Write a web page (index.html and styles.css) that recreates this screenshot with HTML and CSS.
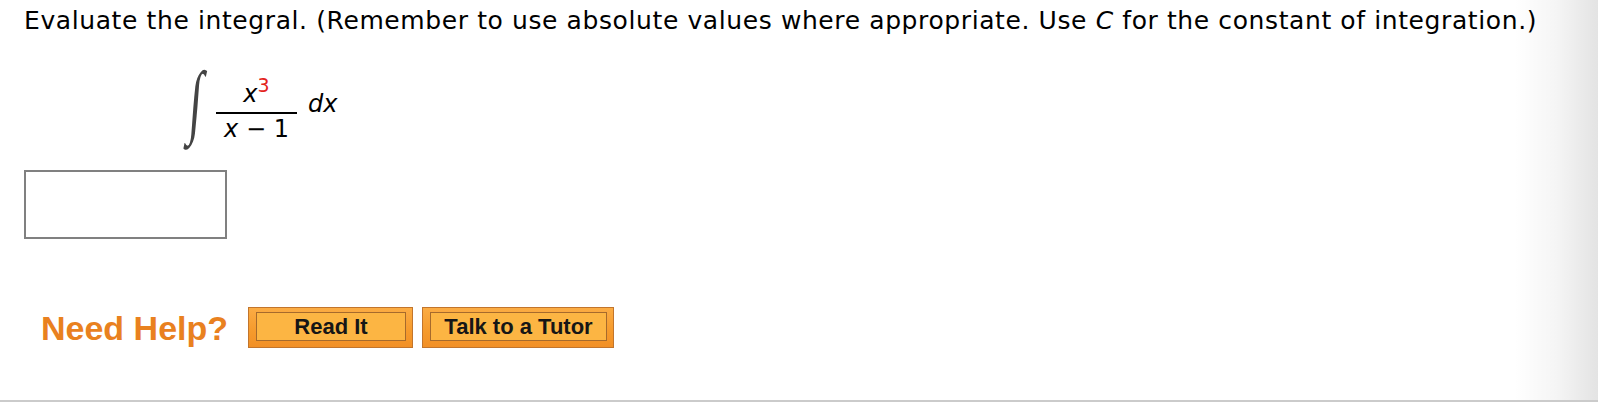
FILE: index.html
```html
<!DOCTYPE html>
<html lang="en">
<head>
<meta charset="utf-8">
<title>Evaluate the integral</title>
<link rel="stylesheet" href="styles.css">
</head>
<body>
<div class="page">
  <div class="content">
    <p class="prompt">Evaluate the integral. (Remember to use absolute values where appropriate. Use <i>C</i> for the constant of integration.)</p>
    <div class="math">
      <span class="int"><span class="int-glyph">∫</span></span>
      <span class="frac">
        <span class="num"><i>x</i><sup class="pow">3</sup></span>
        <span class="den"><i>x</i> − 1</span>
      </span>
      <span class="dx"><i>dx</i></span>
    </div>
    <div class="answer"></div>
    <div class="help">
      <span class="need">Need Help?</span>
      <button class="btn btn-read"><span class="btn-face">Read It</span></button>
      <button class="btn btn-tutor"><span class="btn-face">Talk to a Tutor</span></button>
    </div>
  </div>
  <div class="shade"></div>
</div>
<div class="rule"></div>
</body>
</html>
```

FILE: styles.css
```css
html, body {
  margin: 0;
  padding: 0;
  background: #ffffff;
}

body {
  width: 1598px;
  height: 406px;
  overflow: hidden;
  font-family: "DejaVu Sans", Verdana, sans-serif;
  color: #000;
}

.page {
  position: relative;
  height: 400px;
}

.content {
  padding: 2px 0 0 24px;
}

.prompt {
  margin: 0;
  font-size: 25px;
  letter-spacing: 0.6px;
  line-height: 37px;
  white-space: nowrap;
}

.prompt i {
  font-style: oblique;
}

.math {
  display: flex;
  align-items: flex-start;
  margin-top: 31px;
  height: 75px;
}

.int {
  display: block;
  width: 30px;
  height: 75px;
  margin-left: 156px;
  overflow: visible;
}

.int-glyph {
  display: block;
  font-family: "Liberation Serif", "Times New Roman", serif;
  font-size: 80px;
  line-height: 75px;
  text-align: center;
  color: #444;
  transform: translate(1px, -7px) scale(0.58, 1.02) skewX(-8deg);
}

.frac {
  display: flex;
  flex-direction: column;
  width: 81px;
  margin-left: 6px;
  margin-top: 10px;
  font-size: 24px;
  text-align: center;
}

.num {
  display: block;
  height: 28px;
  line-height: 28px;
  padding-bottom: 4px;
  border-bottom: 2px solid #000;
}

.den {
  display: block;
  height: 28px;
  line-height: 28px;
  padding-top: 1px;
}

.frac i, .dx i {
  font-style: oblique;
}

.pow {
  font-size: 19px;
  line-height: 0;
  vertical-align: 10px;
  color: #e3231b;
}

.dx {
  display: block;
  margin-left: 11px;
  margin-top: 20px;
  font-size: 24px;
  line-height: 28px;
}

.answer {
  box-sizing: border-box;
  width: 203px;
  height: 69px;
  margin-top: 25px;
  border: 2px solid #808080;
  background: #fff;
}

.help {
  display: flex;
  align-items: center;
  margin-top: 68px;
  height: 41px;
}

.need {
  margin-left: 17px;
  width: 207px;
  font-family: "Liberation Sans", Arial, sans-serif;
  font-weight: bold;
  font-size: 34px;
  line-height: 34px;
  color: #e9811f;
  white-space: nowrap;
}

.btn {
  box-sizing: border-box;
  display: flex;
  height: 41px;
  margin: 0;
  padding: 4px 6px 6px 7px;
  border: 1px solid #c2752c;
  background: linear-gradient(#fbac44, #f59a2c 60%, #f29026);
  cursor: pointer;
}

.btn-read {
  width: 165px;
}

.btn-tutor {
  width: 192px;
  margin-left: 9px;
}

.btn-face {
  flex: 1;
  display: flex;
  align-items: center;
  justify-content: center;
  padding-top: 1px;
  border: 1px solid #a66a2c;
  background: #fcb543;
  font-family: "Liberation Sans", Arial, sans-serif;
  font-weight: bold;
  font-size: 22px;
  color: #161616;
  white-space: nowrap;
}

.shade {
  position: absolute;
  top: 0;
  right: 0;
  width: 84px;
  height: 400px;
  background: linear-gradient(to right, rgba(0,0,0,0), rgba(0,0,0,0.04) 50%, rgba(0,0,0,0.11));
  pointer-events: none;
}

.rule {
  height: 2px;
  background: #cbcbcb;
}
```
